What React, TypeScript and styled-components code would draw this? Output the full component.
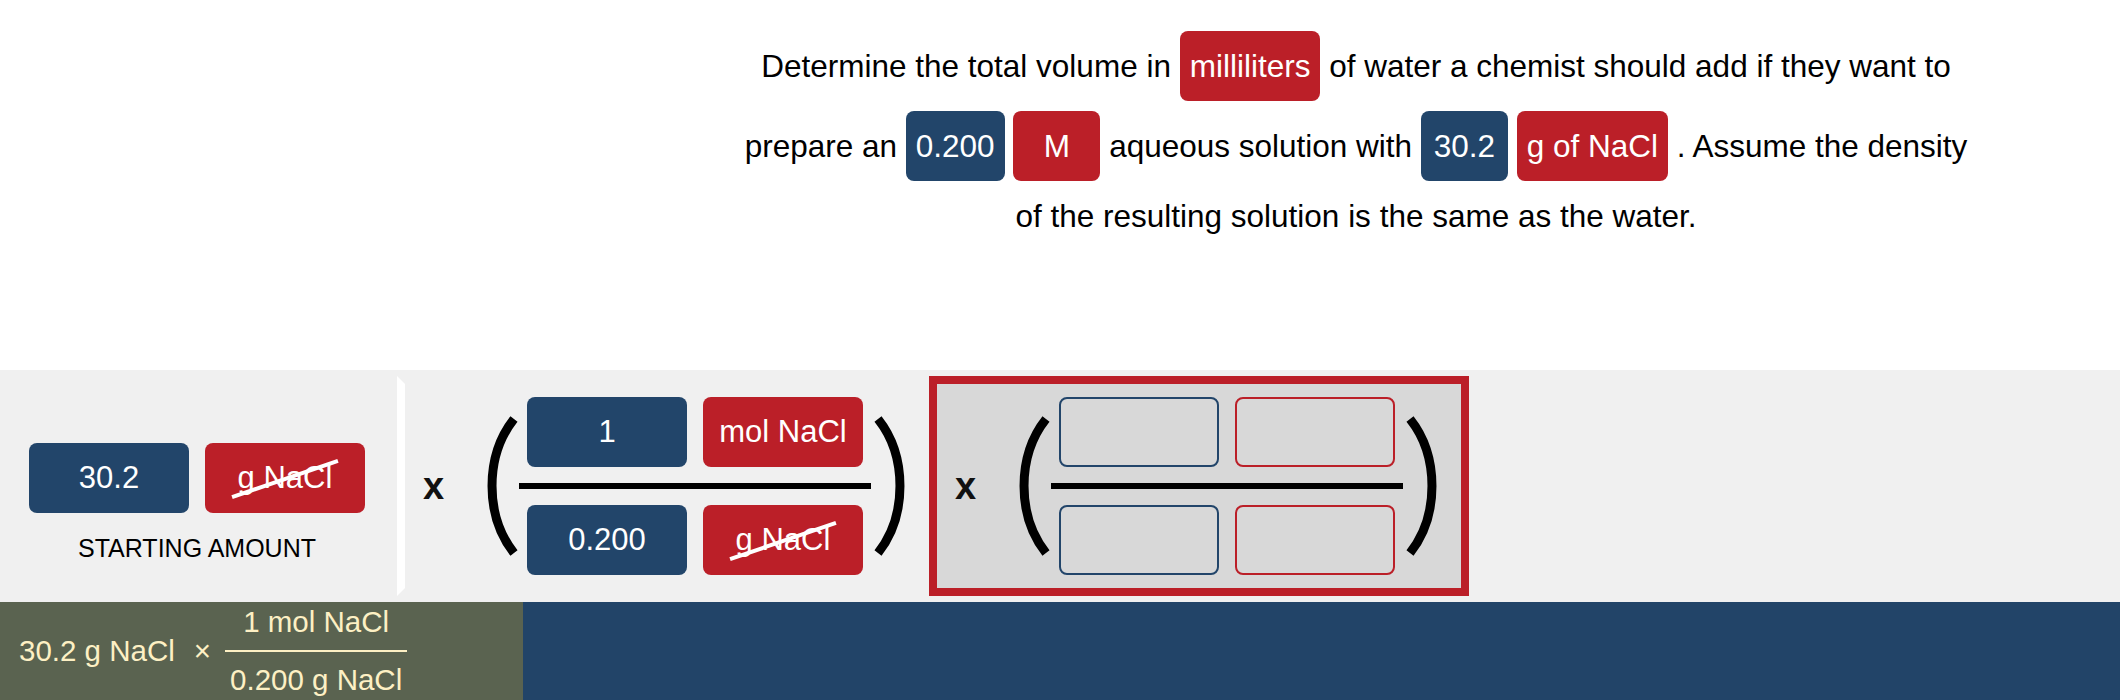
import React, {FC} from 'react';
import styled, {createGlobalStyle, css} from 'styled-components';

const NAVY = '#22456a';
const RED = '#bb1f28';
const CREAM = '#fdf0c4';

const GlobalStyle = createGlobalStyle`
  html, body {
    margin: 0;
    padding: 0;
    background: #ffffff;
    font-family: "Liberation Sans", Arial, sans-serif;
    color: #000;
  }
`;

const Page = styled.div`
  width: 2120px;
  height: 700px;
  display: flex;
  flex-direction: column;
  overflow: hidden;
`;

const QuestionArea = styled.div`
  height: 370px;
  box-sizing: border-box;
  padding: 26px 0 0 592px;
  display: flex;
  justify-content: center;
`;

const Question = styled.p`
  margin: 0;
  max-width: 1250px;
  text-align: center;
  font-size: 31.5px;
  line-height: 60px;
`;

const Tag = styled.span<{$tone: 'navy' | 'red'}>`
  display: inline-block;
  box-sizing: border-box;
  min-width: 87px;
  height: 70px;
  margin: 5px 0;
  padding: 0 10px;
  line-height: 70px;
  text-align: center;
  color: #fff;
  border-radius: 8px;
  background: ${p => (p.$tone === 'navy' ? NAVY : RED)};
`;

const Band = styled.div`
  height: 232px;
  box-sizing: border-box;
  padding: 6px 0;
  display: flex;
  background: #f0f0f0;
`;

const Start = styled.div`
  display: flex;
  flex-direction: column;
  align-items: center;
  padding: 67px 32px 0 29px;
`;

const TileRow = styled.div`
  display: flex;
  gap: 16px;
`;

const Tile = styled.div<{$tone: 'navy' | 'red'; $struck?: boolean}>`
  position: relative;
  width: 160px;
  height: 70px;
  display: flex;
  align-items: center;
  justify-content: center;
  border-radius: 8px;
  font-size: 31px;
  color: #fff;
  background: ${p => (p.$tone === 'navy' ? NAVY : RED)};

  ${p => p.$struck && css`
    &::after {
      content: '';
      position: absolute;
      left: 24px;
      top: 34px;
      width: 112px;
      height: 4px;
      background: #fff;
      transform: rotate(-19deg);
    }
  `}
`;

const Slot = styled.div<{$tone: 'navy' | 'red'}>`
  box-sizing: border-box;
  width: 160px;
  height: 70px;
  border-radius: 8px;
  border: 2px solid ${p => (p.$tone === 'navy' ? NAVY : RED)};
`;

const Caption = styled.div`
  margin-top: 21px;
  font-size: 25px;
  text-transform: uppercase;
`;

const Factor = styled.div<{$active?: boolean}>`
  display: flex;
  align-items: center;
  padding: 0 24px 0 18px;
  border: 8px solid transparent;
  border-left-color: #fff;
  border-right-width: 0;

  ${p => p.$active && css`
    border-color: ${RED};
    border-right-width: 8px;
    background: #d8d8d8;
  `}
`;

const Times = styled.span`
  width: 21px;
  margin-right: 43px;
  font-size: 38px;
  font-weight: 700;
  line-height: 1;
  color: #111;
`;

const Fraction = styled.div`
  width: 352px;
  display: flex;
  flex-direction: column;
  align-items: center;
  gap: 16px;
`;

const FractionBar = styled.div`
  align-self: stretch;
  height: 6px;
  background: #000;
`;

const ParenSvg = styled.svg<{$right?: boolean}>`
  flex: none;
  overflow: visible;
  margin-left: ${p => (p.$right ? '2px' : '0')};
`;

const Paren: FC<{right?: boolean}> = ({right}) => (
  <ParenSvg $right={right} width="32" height="140" viewBox="0 0 32 140">
    <path
      d={right ? 'M5 3 C34.3 40, 34.3 100, 5 137' : 'M27 3 C-2.3 40, -2.3 100, 27 137'}
      fill="none"
      stroke="#000"
      strokeWidth="9"
    />
  </ParenSvg>
);

const Footer = styled.div`
  height: 98px;
  display: flex;
  background: #224468;
`;

const Summary = styled.div`
  width: 523px;
  box-sizing: border-box;
  padding-left: 19px;
  display: flex;
  align-items: center;
  background: #5a6350;
  color: ${CREAM};
  font-size: 29.5px;
  white-space: nowrap;
`;

const SummaryTimes = styled.span`
  margin: 0 14px 0 19px;
`;

const SummaryFraction = styled.div`
  display: flex;
  flex-direction: column;
  align-items: center;
  gap: 11px;
`;

const SummaryTerm = styled.div`
  padding: 0 5px;
`;

const SummaryBar = styled.div`
  align-self: stretch;
  height: 2px;
  background: ${CREAM};
`;

interface Term {
  value: string;
  unit: string;
  struck?: boolean;
}

const ConversionFactor: FC<{top: Term; bottom: Term}> = ({top, bottom}) => (
  <Factor>
    <Times>x</Times>
    <Paren />
    <Fraction>
      <TileRow>
        <Tile $tone="navy">{top.value}</Tile>
        <Tile $tone="red" $struck={top.struck}>{top.unit}</Tile>
      </TileRow>
      <FractionBar />
      <TileRow>
        <Tile $tone="navy">{bottom.value}</Tile>
        <Tile $tone="red" $struck={bottom.struck}>{bottom.unit}</Tile>
      </TileRow>
    </Fraction>
    <Paren right />
  </Factor>
);

const EmptyFactor: FC = () => (
  <Factor $active>
    <Times>x</Times>
    <Paren />
    <Fraction>
      <TileRow>
        <Slot $tone="navy" />
        <Slot $tone="red" />
      </TileRow>
      <FractionBar />
      <TileRow>
        <Slot $tone="navy" />
        <Slot $tone="red" />
      </TileRow>
    </Fraction>
    <Paren right />
  </Factor>
);

const App: FC = () => {
  return (
    <Page>
      <GlobalStyle />
      <QuestionArea>
        <Question>
          Determine the total volume in <Tag $tone="red">milliliters</Tag> of water a chemist should add if they want to
          prepare an <Tag $tone="navy">0.200</Tag> <Tag $tone="red">M</Tag> aqueous solution with{' '}
          <Tag $tone="navy">30.2</Tag> <Tag $tone="red">g of NaCl</Tag> . Assume the density of the resulting solution
          is the same as the water.
        </Question>
      </QuestionArea>

      <Band>
        <Start>
          <TileRow>
            <Tile $tone="navy">30.2</Tile>
            <Tile $tone="red" $struck>g NaCl</Tile>
          </TileRow>
          <Caption>Starting Amount</Caption>
        </Start>
        <ConversionFactor
          top={{value: '1', unit: 'mol NaCl'}}
          bottom={{value: '0.200', unit: 'g NaCl', struck: true}}
        />
        <EmptyFactor />
      </Band>

      <Footer>
        <Summary>
          30.2 g NaCl
          <SummaryTimes>×</SummaryTimes>
          <SummaryFraction>
            <SummaryTerm>1 mol NaCl</SummaryTerm>
            <SummaryBar />
            <SummaryTerm>0.200 g NaCl</SummaryTerm>
          </SummaryFraction>
        </Summary>
      </Footer>
    </Page>
  );
};

export default App;
